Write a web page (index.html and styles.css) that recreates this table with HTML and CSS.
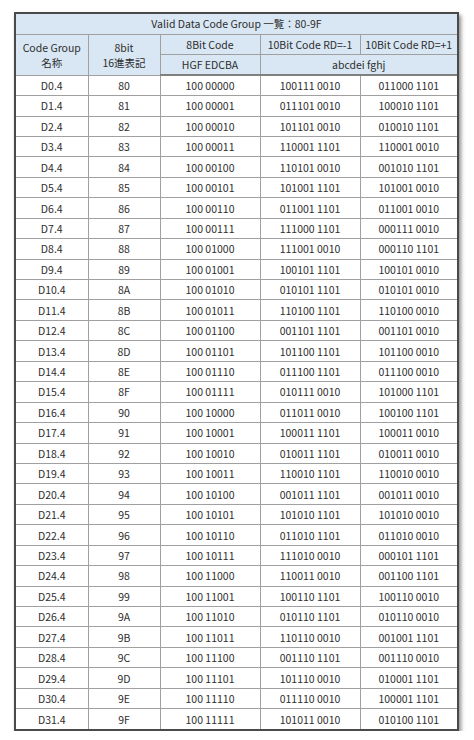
FILE: index.html
```html
<!DOCTYPE html>
<html lang="ja">
<head>
<meta charset="utf-8">
<link rel="stylesheet" href="styles.css">
</head>
<body>
<div class="frame">
<table class="codes">
<colgroup><col class="c1"><col class="c2"><col class="c3"><col class="c4"><col class="c5"></colgroup>
<thead>
<tr class="h"><th colspan="5">Valid Data Code Group 一覧：80-9F</th></tr>
<tr class="h"><th rowspan="2" class="two">Code Group<br>名称</th><th rowspan="2" class="two">8bit<br>16進表記</th><th>8Bit Code</th><th>10Bit Code RD=-1</th><th>10Bit Code RD=+1</th></tr>
<tr class="h last"><th>HGF EDCBA</th><th colspan="2">abcdei fghj</th></tr>
</thead>
<tbody>
<tr><td>D0.4</td><td>80</td><td>100 00000</td><td>100111 0010</td><td>011000 1101</td></tr>
<tr><td>D1.4</td><td>81</td><td>100 00001</td><td>011101 0010</td><td>100010 1101</td></tr>
<tr><td>D2.4</td><td>82</td><td>100 00010</td><td>101101 0010</td><td>010010 1101</td></tr>
<tr><td>D3.4</td><td>83</td><td>100 00011</td><td>110001 1101</td><td>110001 0010</td></tr>
<tr><td>D4.4</td><td>84</td><td>100 00100</td><td>110101 0010</td><td>001010 1101</td></tr>
<tr><td>D5.4</td><td>85</td><td>100 00101</td><td>101001 1101</td><td>101001 0010</td></tr>
<tr><td>D6.4</td><td>86</td><td>100 00110</td><td>011001 1101</td><td>011001 0010</td></tr>
<tr><td>D7.4</td><td>87</td><td>100 00111</td><td>111000 1101</td><td>000111 0010</td></tr>
<tr><td>D8.4</td><td>88</td><td>100 01000</td><td>111001 0010</td><td>000110 1101</td></tr>
<tr><td>D9.4</td><td>89</td><td>100 01001</td><td>100101 1101</td><td>100101 0010</td></tr>
<tr><td>D10.4</td><td>8A</td><td>100 01010</td><td>010101 1101</td><td>010101 0010</td></tr>
<tr><td>D11.4</td><td>8B</td><td>100 01011</td><td>110100 1101</td><td>110100 0010</td></tr>
<tr><td>D12.4</td><td>8C</td><td>100 01100</td><td>001101 1101</td><td>001101 0010</td></tr>
<tr><td>D13.4</td><td>8D</td><td>100 01101</td><td>101100 1101</td><td>101100 0010</td></tr>
<tr><td>D14.4</td><td>8E</td><td>100 01110</td><td>011100 1101</td><td>011100 0010</td></tr>
<tr><td>D15.4</td><td>8F</td><td>100 01111</td><td>010111 0010</td><td>101000 1101</td></tr>
<tr><td>D16.4</td><td>90</td><td>100 10000</td><td>011011 0010</td><td>100100 1101</td></tr>
<tr><td>D17.4</td><td>91</td><td>100 10001</td><td>100011 1101</td><td>100011 0010</td></tr>
<tr><td>D18.4</td><td>92</td><td>100 10010</td><td>010011 1101</td><td>010011 0010</td></tr>
<tr><td>D19.4</td><td>93</td><td>100 10011</td><td>110010 1101</td><td>110010 0010</td></tr>
<tr><td>D20.4</td><td>94</td><td>100 10100</td><td>001011 1101</td><td>001011 0010</td></tr>
<tr><td>D21.4</td><td>95</td><td>100 10101</td><td>101010 1101</td><td>101010 0010</td></tr>
<tr><td>D22.4</td><td>96</td><td>100 10110</td><td>011010 1101</td><td>011010 0010</td></tr>
<tr><td>D23.4</td><td>97</td><td>100 10111</td><td>111010 0010</td><td>000101 1101</td></tr>
<tr><td>D24.4</td><td>98</td><td>100 11000</td><td>110011 0010</td><td>001100 1101</td></tr>
<tr><td>D25.4</td><td>99</td><td>100 11001</td><td>100110 1101</td><td>100110 0010</td></tr>
<tr><td>D26.4</td><td>9A</td><td>100 11010</td><td>010110 1101</td><td>010110 0010</td></tr>
<tr><td>D27.4</td><td>9B</td><td>100 11011</td><td>110110 0010</td><td>001001 1101</td></tr>
<tr><td>D28.4</td><td>9C</td><td>100 11100</td><td>001110 1101</td><td>001110 0010</td></tr>
<tr><td>D29.4</td><td>9D</td><td>100 11101</td><td>101110 0010</td><td>010001 1101</td></tr>
<tr><td>D30.4</td><td>9E</td><td>100 11110</td><td>011110 0010</td><td>100001 1101</td></tr>
<tr><td>D31.4</td><td>9F</td><td>100 11111</td><td>101011 0010</td><td>010100 1101</td></tr>
</tbody>
</table>
</div>
</body>
</html>
```
FILE: styles.css
```css
html, body {
  margin: 0;
  padding: 0;
  background: #ffffff;
}
body {
  font-family: "Noto Sans CJK JP", "Noto Sans", sans-serif;
  color: #2e2e2e;
}
.frame {
  margin: 12px 0 0 14px;
  width: 441px;
  border: 2px solid #4a4a4a;
  box-shadow: 2px 3px 4px rgba(0, 0, 0, 0.45);
  background: #ffffff;
}
.codes {
  width: 441px;
  border-collapse: collapse;
  border-style: hidden;
  table-layout: fixed;
  font-size: 10.5px;
}
.c1 { width: 72px; }
.c2 { width: 72px; }
.c3 { width: 100px; }
.c4 { width: 100px; }
.c5 { width: 97px; }
.codes th,
.codes td {
  border: 1px solid #a0a0a0;
  padding: 0;
  text-align: center;
  vertical-align: middle;
  line-height: 13px;
  font-weight: normal;
  white-space: nowrap;
}
.codes th {
  background: #d8e7f3;
}
.codes th.two {
  line-height: 15px;
}
.codes tr.h {
  height: 20.4px;
}
.codes tr.last th {
  border-bottom: 2px solid #808080;
}
.codes tbody tr {
  height: 20.45px;
}
```
